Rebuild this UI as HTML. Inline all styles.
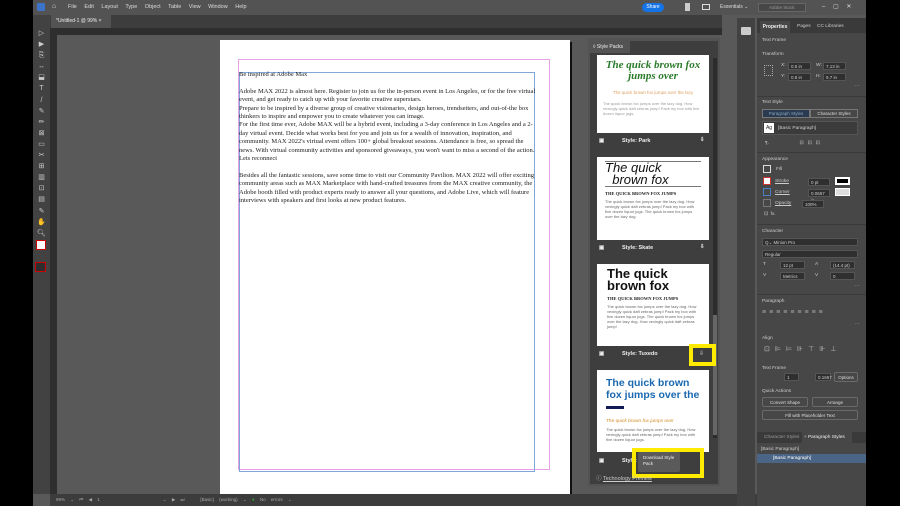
<!DOCTYPE html><html><head><style>
*{margin:0;padding:0;box-sizing:border-box}
body{width:900px;height:506px;background:#000;position:relative;overflow:hidden;font-family:"Liberation Sans",sans-serif;color:#ddd;font-size:6px}
.a{position:absolute}
.pt{font-family:"Liberation Serif",serif;color:#222;font-size:6.5px;line-height:8.4px}
.card{position:absolute;left:597px;width:112px;background:#fff;overflow:hidden}
.lbl{position:absolute;left:597px;width:112px;height:17px;color:#eee;font-size:5.5px;font-weight:bold}
.fld{position:absolute;background:#2f2f2f;border:1px solid #555;height:8px;font-size:4.5px;color:#ccc;padding-left:2px;line-height:7px}
.btn{position:absolute;border:1px solid #6a6a6a;height:10px;font-size:4.5px;color:#ddd;text-align:center;line-height:9px;border-radius:2px}
.h{position:absolute;font-size:4.8px;color:#ccc}
.sm{font-size:4px;color:#666;line-height:5px}
.ic{position:absolute;width:8px;height:8px;border:1px solid #aaa}
</style></head><body>
<div class="a" style="left:33px;top:0;width:833px;height:506px;background:#595959"></div>
<div class="a" style="left:33px;top:0;width:833px;height:15px;background:#535353"></div>
<div class="a" style="left:37px;top:3px;width:8px;height:8px;background:#3b74c8;border-radius:1px"></div>
<div class="a" style="left:52px;top:3px;color:#ddd;font-size:7px">⌂</div>
<div class="a" style="left:68px;top:4px;font-size:5.5px;color:#ddd;word-spacing:6px">File Edit Layout Type Object Table View Window Help</div>
<div class="a" style="left:642px;top:3px;width:22px;height:9px;background:#1473e6;border-radius:5px;font-size:5px;text-align:center;line-height:9px;color:#fff">Share</div>
<div class="a" style="left:685px;top:3px;width:5px;height:8px;background:#ccc"></div>
<div class="a" style="left:702px;top:4px;width:8px;height:6px;border:1px solid #ddd"></div>
<div class="a" style="left:720px;top:4px;font-size:5px">Essentials ⌄</div>
<div class="a" style="left:758px;top:3px;width:48px;height:9px;border:1px solid #666;background:#474747;font-size:4.5px;color:#999;padding-left:10px;line-height:7px">Adobe Stock</div>
<div class="a" style="left:822px;top:3px;font-size:6px;color:#ddd;word-spacing:6px">– ▢ ✕</div>
<div class="a" style="left:50px;top:15px;width:672px;height:13px;background:#3d3d3d"></div>
<div class="a" style="left:51px;top:15px;width:60px;height:13px;background:#535353;font-size:5px;line-height:13px;padding-left:5px;color:#eee">*Untitled-1 @ 99% ×</div>
<div class="a" style="left:33px;top:15px;width:17px;height:479px;background:#424242"></div>
<div class="a" style="left:36px;top:28px;width:11px;height:270px;color:#ccc;font-size:7px;line-height:11.1px;text-align:center">▷<br>▶<br>⎘<br>↔<br>⬓<br>T<br>/<br>✎<br>✏<br>⊠<br>▭<br>✂<br>⊞<br>▥<br>⊡<br>▤<br>✎<br>✋<br>🔍︎</div>
<div class="a" style="left:36px;top:240px;width:10px;height:10px;background:#fff;border:1px solid #c00"></div>
<div class="a" style="left:35px;top:262px;width:11px;height:10px;background:#2d2d2d;border:1px solid #c00"></div>
<div class="a" style="left:50px;top:28px;width:672px;height:7px;background:#2e2e2e"></div>
<div class="a" style="left:50px;top:28px;width:7px;height:466px;background:#2e2e2e"></div>
<div class="a" style="left:222px;top:42px;width:350px;height:455px;background:#111"></div>
<div class="a" style="left:220px;top:40px;width:350px;height:454px;background:#fff"></div>
<div class="a" style="left:238px;top:59px;width:312px;height:411px;border:1px solid #e8a0e8"></div>
<div class="a" style="left:239px;top:72px;width:296px;height:400px;border:1px solid #7fa8d8"></div>
<div class="a pt" style="left:239px;top:71px;width:297px">Be inspired at Adobe Max<br><br>Adobe MAX 2022 is almost here. Register to join us for the in-person event in Los Angeles, or for the free virtual event, and get ready to catch up with your favorite creative superstars.<br>Prepare to be inspired by a diverse group of creative visionaries, design heroes, trendsetters, and out-of-the box thinkers to inspire and empower you to create whatever you can image.<br>For the first time ever, Adobe MAX will be a hybrid event, including a 3-day conference in Los Angeles and a 2-day virtual event. Decide what works best for you and join us for a wealth of innovation, inspiration, and community. MAX 2022's virtual event offers 100+ global breakout sessions. Attendance is free, so spread the news. With virtual community activities and sponsored giveaways, you won't want to miss a second of the action.<br>Lets reconnect<br><br>Besides all the fantastic sessions, save some time to visit our Community Pavilion. MAX 2022 will offer exciting community areas such as MAX Marketplace with hand-crafted treasures from the MAX creative community, the Adobe booth filled with product experts ready to answer all your questions, and Adobe Live, which will feature interviews with speakers and first looks at new product features.</div>
<div class="a" style="left:50px;top:494px;width:816px;height:12px;background:#3c3c3c;font-size:4.5px;color:#aaa;line-height:12px;padding-left:6px;word-spacing:4px">99% ⌄ ⏮ ◀ 1 &nbsp;&nbsp;&nbsp;&nbsp;&nbsp;&nbsp;&nbsp;&nbsp;&nbsp;&nbsp; ⌄ ▶ ⏭ &nbsp; [Basic] (working) ⌄ <span style="color:#3a3">●</span> No errors ⌄</div>
<div class="a" style="left:588px;top:38px;width:132px;height:448px;background:#535353"></div>
<div class="a" style="left:590px;top:41px;width:128px;height:443px;background:#3e3e3e"></div>
<div class="a" style="left:590px;top:41px;width:40px;height:12px;background:#535353;font-size:5px;line-height:12px;padding-left:3px;color:#eee">◊ Style Packs</div>
<div class="a" style="left:713px;top:58px;width:4px;height:380px;background:#2c2c2c"></div>
<div class="a" style="left:713px;top:315px;width:4px;height:120px;background:#666"></div>
<div class="card" style="top:55px;height:78px">
 <div style="color:#2a7a2a;font-family:'Liberation Serif',serif;font-style:italic;font-weight:bold;font-size:11px;text-align:center;line-height:11px;margin-top:5px">The quick brown fox<br>jumps over</div>
 <div style="color:#e0a060;font-size:4.5px;text-align:center;margin-top:8px">The quick brown fox jumps over the lazy</div>
 <div class="sm" style="margin:6px 6px 0;color:#999">The quick brown fox jumps over the lazy dog. How vexingly quick daft zebras jump! Pack my box with five dozen liquor jugs.</div>
</div>
<div class="lbl" style="top:133px"><span class="a" style="left:2px;top:5px">▣</span><span class="a" style="left:25px;top:5px">Style: Park</span><span class="a" style="left:103px;top:4px">⇩</span></div>
<div class="card" style="top:157px;height:83px;padding:4px 8px">
 <div style="border-top:1px solid #777;border-bottom:1px solid #777;font-style:italic;font-size:13px;line-height:12px;color:#111">The quick<br>&nbsp;&nbsp;brown fox</div>
 <div style="font-size:4.5px;font-weight:bold;color:#222;margin-top:4px;font-family:'Liberation Serif',serif">THE QUICK BROWN FOX JUMPS</div>
 <div class="sm" style="margin-top:3px">The quick brown fox jumps over the lazy dog. How vexingly quick daft zebras jump! Pack my box with five dozen liquor jugs. The quick brown fox jumps over the lazy dog.</div>
</div>
<div class="lbl" style="top:240px"><span class="a" style="left:2px;top:5px">▣</span><span class="a" style="left:25px;top:5px">Style: Skate</span><span class="a" style="left:103px;top:4px">⇩</span></div>
<div class="card" style="top:264px;height:82px;padding:4px 10px">
 <div style="font-weight:bold;font-size:13px;line-height:12px;color:#111">The quick<br>brown fox</div>
 <div style="font-size:4.5px;font-weight:bold;color:#222;margin-top:4px;font-family:'Liberation Serif',serif">THE QUICK BROWN FOX JUMPS</div>
 <div class="sm" style="margin-top:3px">The quick brown fox jumps over the lazy dog. How vexingly quick daft zebras jump! Pack my box with five dozen liquor jugs. The quick brown fox jumps over the lazy dog. How vexingly quick daft zebras jump!</div>
</div>
<div class="lbl" style="top:346px"><span class="a" style="left:2px;top:5px">▣</span><span class="a" style="left:25px;top:5px">Style: Tuxedo</span></div>
<div class="a" style="left:689px;top:344px;width:27px;height:22px;border:4px solid #ffeb00"></div>
<div class="a" style="left:699px;top:350px;color:#ddd;font-size:6px">⇩</div>
<div class="card" style="top:370px;height:82px;padding:8px 9px">
 <div style="font-weight:bold;font-size:10.5px;line-height:11.5px;color:#1a68b0;white-space:nowrap">The quick brown<br>fox jumps over the</div>
 <div style="width:18px;height:3px;background:#111a55;margin-top:5px"></div>
 <div style="font-size:4.8px;font-style:italic;color:#d48a20;margin-top:10px">The quick brown fox jumps over</div>
 <div class="sm" style="margin-top:3px">The quick brown fox jumps over the lazy dog. How vexingly quick daft zebras jump! Pack my box with five dozen liquor jugs.</div>
</div>
<div class="lbl" style="top:452px"><span class="a" style="left:2px;top:6px">▣</span><span class="a" style="left:25px;top:6px">Style: E</span></div>
<div class="a" style="left:632px;top:448px;width:72px;height:30px;border:4px solid #ffeb00"></div>
<div class="a" style="left:638px;top:452px;width:42px;height:20px;background:#5a5a5a;border-radius:2px;font-size:4.5px;color:#eee;padding:3px 5px;line-height:6px">Download Style Pack</div>
<div class="a" style="left:596px;top:474px;font-size:5.5px;color:#ccc">ⓘ <u>Technology Preview</u></div>
<div class="a" style="left:737px;top:18px;width:18px;height:488px;background:#424242"></div>
<div class="a" style="left:741px;top:27px;width:10px;height:8px;background:#ccc;border-radius:1px"></div>
<div class="a" style="left:757px;top:18px;width:109px;height:410px;background:#474747"></div>
<div class="a" style="left:757px;top:18px;width:109px;height:15px;background:#3a3a3a"></div>
<div class="a" style="left:760px;top:21px;width:30px;height:12px;background:#474747;font-size:5px;line-height:12px;text-align:center;color:#eee;font-weight:bold">Properties</div>
<div class="h" style="left:797px;top:24px">Pages</div>
<div class="h" style="left:817px;top:24px">CC Libraries</div>
<div class="h" style="left:762px;top:38px">Text Frame</div>
<div class="h" style="left:762px;top:52px">Transform</div>
<div class="a" style="left:764px;top:65px;width:9px;height:11px;border:1px dotted #aaa"></div>
<div class="h" style="left:781px;top:63px">X:</div><div class="fld" style="left:788px;top:62px;width:23px">0.5 in</div>
<div class="h" style="left:781px;top:74px">Y:</div><div class="fld" style="left:788px;top:73px;width:23px">0.8 in</div>
<div class="h" style="left:816px;top:63px">W:</div><div class="fld" style="left:823px;top:62px;width:23px">7.13 in</div>
<div class="h" style="left:816px;top:74px">H:</div><div class="fld" style="left:823px;top:73px;width:23px">9.7 in</div>
<div class="h" style="left:855px;top:84px">···</div>
<div class="a" style="left:757px;top:96px;width:109px;height:1px;background:#3a3a3a"></div>
<div class="h" style="left:762px;top:100px">Text Style</div>
<div class="a" style="left:762px;top:109px;width:48px;height:9px;background:#2a3a50;border:1px solid #777;font-size:4.5px;text-align:center;line-height:7px;color:#8ab">Paragraph Styles</div>
<div class="a" style="left:810px;top:109px;width:48px;height:9px;border:1px solid #777;font-size:4.5px;text-align:center;line-height:7px">Character Styles</div>
<div class="a" style="left:762px;top:121px;width:96px;height:14px;background:#3b3b3b;border:1px solid #555"></div>
<div class="a" style="left:764px;top:123px;width:10px;height:10px;background:#fff;color:#222;font-size:5px;text-align:center;line-height:10px">Ag</div>
<div class="h" style="left:778px;top:126px">[Basic Paragraph]</div>
<div class="h" style="left:765px;top:141px">¶. &nbsp;&nbsp;&nbsp;&nbsp;&nbsp;&nbsp;&nbsp;&nbsp;&nbsp;&nbsp;&nbsp;&nbsp;&nbsp;&nbsp;&nbsp;&nbsp;&nbsp;&nbsp;&nbsp;&nbsp;&nbsp; ⊡ &nbsp; ⊡ &nbsp; ⊡</div>
<div class="a" style="left:757px;top:152px;width:109px;height:1px;background:#3a3a3a"></div>
<div class="h" style="left:762px;top:157px">Appearance</div>
<div class="ic" style="left:763px;top:165px;border-color:#ddd"></div><div class="h" style="left:776px;top:167px">Fill</div>
<div class="ic" style="left:763px;top:177px;border-color:#c33;background:#fff"></div><div class="h" style="left:775px;top:179px;text-decoration:underline">Stroke</div>
<div class="fld" style="left:808px;top:178px;width:22px">0 pt</div>
<div class="a" style="left:835px;top:177px;width:15px;height:8px;background:#000;border:2px solid #fff"></div>
<div class="ic" style="left:763px;top:188px;border-color:#4a7fc0"></div><div class="h" style="left:775px;top:190px;text-decoration:underline">Corner</div>
<div class="fld" style="left:808px;top:189px;width:22px">0.0667 in</div>
<div class="a" style="left:835px;top:188px;width:15px;height:8px;background:#ddd;border:1px solid #fff"></div>
<div class="ic" style="left:763px;top:199px;border-color:#777"></div><div class="h" style="left:775px;top:201px;text-decoration:underline">Opacity</div>
<div class="fld" style="left:802px;top:200px;width:22px">100%</div>
<div class="h" style="left:764px;top:212px">⊡ &nbsp;fx.</div>
<div class="a" style="left:757px;top:224px;width:109px;height:1px;background:#3a3a3a"></div>
<div class="h" style="left:762px;top:229px">Character</div>
<div class="fld" style="left:762px;top:238px;width:96px">Q⌄ Minion Pro</div>
<div class="fld" style="left:762px;top:250px;width:96px">Regular</div>
<div class="h" style="left:763px;top:262px">T</div><div class="fld" style="left:780px;top:261px;width:25px">12 pt</div>
<div class="h" style="left:815px;top:262px">A</div><div class="fld" style="left:830px;top:261px;width:25px">(14.4 pt)</div>
<div class="h" style="left:763px;top:273px">V</div><div class="fld" style="left:780px;top:272px;width:25px">Metrics</div>
<div class="h" style="left:815px;top:273px">V</div><div class="fld" style="left:830px;top:272px;width:25px">0</div>
<div class="h" style="left:855px;top:284px">···</div>
<div class="a" style="left:757px;top:294px;width:109px;height:1px;background:#3a3a3a"></div>
<div class="h" style="left:762px;top:299px">Paragraph</div>
<div class="a" style="left:762px;top:309px;font-size:7px;color:#aaa;letter-spacing:3px">≡≡≡≡≡≡≡≡≡</div>
<div class="h" style="left:855px;top:322px">···</div>
<div class="h" style="left:762px;top:336px">Align</div>
<div class="a" style="left:764px;top:345px;font-size:7px;color:#bbb;letter-spacing:5px">⊡⊫⊨⊪⊤⊪⊥</div>
<div class="h" style="left:762px;top:366px">Text Frame</div>
<div class="fld" style="left:784px;top:373px;width:15px">1</div>
<div class="fld" style="left:815px;top:373px;width:16px">0.1667</div>
<div class="btn" style="left:834px;top:372px;width:24px">Options</div>
<div class="h" style="left:762px;top:389px">Quick Actions</div>
<div class="btn" style="left:762px;top:397px;width:46px">Convert Shape</div>
<div class="btn" style="left:812px;top:397px;width:46px">Arrange</div>
<div class="btn" style="left:762px;top:410px;width:96px">Fill with Placeholder Text</div>
<div class="a" style="left:757px;top:428px;width:109px;height:78px;background:#474747"></div>
<div class="a" style="left:757px;top:432px;width:109px;height:11px;background:#3a3a3a"></div>
<div class="h" style="left:764px;top:435px;color:#999">Character Styles</div>
<div class="a" style="left:802px;top:432px;width:50px;height:11px;background:#474747;font-size:4.8px;line-height:11px;color:#eee;padding-left:2px">÷ Paragraph Styles</div>
<div class="h" style="left:761px;top:447px">[Basic Paragraph]</div>
<div class="a" style="left:757px;top:454px;width:109px;height:9px;background:#4a6585;font-size:4.8px;color:#fff;padding-left:16px;line-height:9px">[Basic Paragraph]</div>
</body></html>
